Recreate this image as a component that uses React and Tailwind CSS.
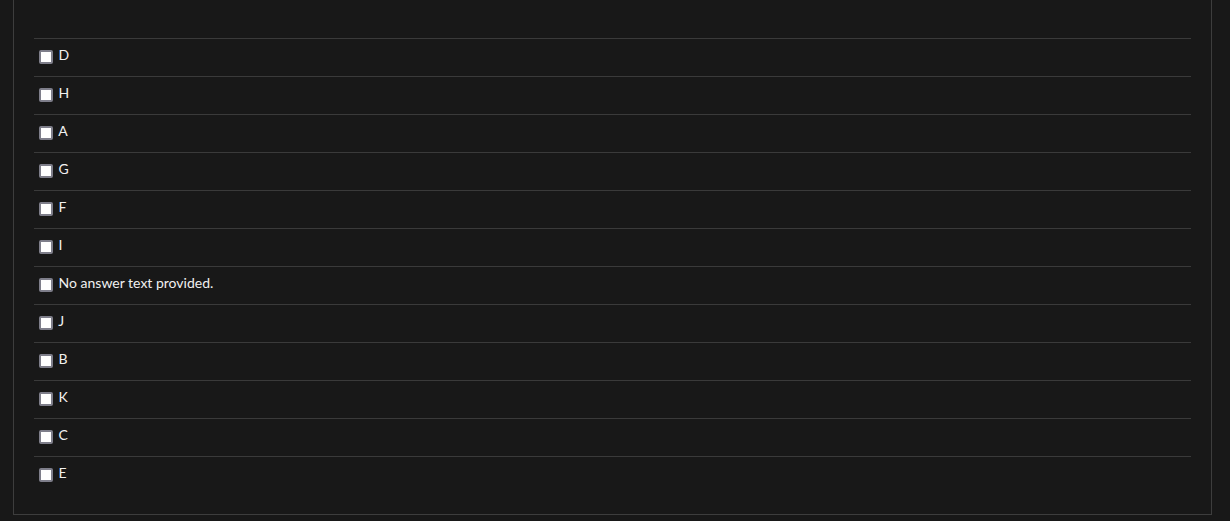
const answers = ['D', 'H', 'A', 'G', 'F', 'I', 'No answer text provided.', 'J', 'B', 'K', 'C', 'E'];

function AnswerRow({ text }) {
  return (
    <div className="border-t border-[#3a3a3a] h-[38px] pt-[3px] pl-px">
      <label className="text-[14px] leading-[20px] text-[#f0f0f0]">
        <input
          type="checkbox"
          className="appearance-none inline-block w-[14px] h-[14px] ml-[4px] mr-[2px] align-[-4px] bg-white border-2 border-[#7e7e8a] rounded-[2px]"
        />{' '}
        {text}
      </label>
    </div>
  );
}

export default function App() {
  return (
    <div
      className="min-h-[521px] bg-[#181818] pl-[13px] pr-[18px] pb-[6px]"
      style={{ fontFamily: 'Lato, "Open Sans", sans-serif' }}
    >
      {/* answer list panel, top edge scrolled out of view */}
      <div className="border-x border-b border-[#3d3d3d] px-[20px] pt-[38px] pb-[20px]">
        {answers.map((a, i) => (
          <AnswerRow key={i} text={a} />
        ))}
      </div>
    </div>
  );
}
